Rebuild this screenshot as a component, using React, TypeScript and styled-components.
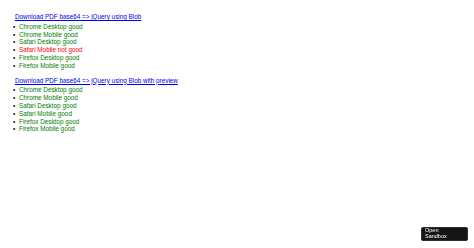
import * as React from 'react';
import styled, { createGlobalStyle } from 'styled-components';

const GlobalStyle = createGlobalStyle`
html, body {
    margin: 0;
    padding: 0;
    background: #ffffff;
}
body {
    font-family: "Liberation Sans", Arial, sans-serif;
    font-size: 6.35px;
    line-height: 7.8px;
}
`;

const Page = styled.div`
display: flex;
flex-direction: column;
padding: 13px 0 0 15px;
width: 474px;
height: 248px;
box-sizing: border-box;
`;

const Section = styled.section`
display: flex;
flex-direction: column;
margin-bottom: 7px;
`;

const Link = styled.a`
color: #0000ee;
text-decoration: underline;
align-self: flex-start;
`;

const List = styled.ul`
margin: 2px 0 0 0;
padding: 0 0 0 4px;
list-style: none;
`;

const Item = styled.li<{ bad?: boolean }>`
display: flex;
color: ${props => props.bad ? '#ff0000' : '#008000'};
&::before {
    content: '•';
    color: #000000;
    width: 6px;
    margin-left: -6px;
    text-align: left;
}
`;

const SandboxButton = styled.button`
position: fixed;
right: 6px;
bottom: 7px;
width: 47px;
height: 14px;
padding: 0 0 0 3px;
background: #151515;
color: #ffffff;
border: 1px solid #2c2c2c;
border-radius: 2px;
font-family: "Liberation Sans", Arial, sans-serif;
font-size: 5.5px;
line-height: 5.6px;
text-align: left;
`;

type TResult = { name: string; ok: boolean };

const first: TResult[] = [
    { name: 'Chrome Desktop', ok: true },
    { name: 'Chrome Mobile', ok: true },
    { name: 'Safari Desktop', ok: true },
    { name: 'Safari Mobile', ok: false },
    { name: 'Firefox Desktop', ok: true },
    { name: 'Firefox Mobile', ok: true },
];

const second: TResult[] = first.map(r => ({ ...r, ok: true }));

const Results: React.FC<{ title: string; results: TResult[] }> = ({ title, results }) => (
    <Section>
        <Link href="#">{title}</Link>
        <List>
            {results.map(r => (
                <Item key={r.name} bad={!r.ok}>{r.name} {r.ok ? 'good' : 'not good'}</Item>
            ))}
        </List>
    </Section>
);

const App: React.FC = () => (
    <>
        <GlobalStyle />
        <Page>
            <Results title="Download PDF base64 => jQuery using Blob" results={first} />
            <Results title="Download PDF base64 => jQuery using Blob with preview" results={second} />
        </Page>
        <SandboxButton>Open<br />Sandbox</SandboxButton>
    </>
);

export default App;
